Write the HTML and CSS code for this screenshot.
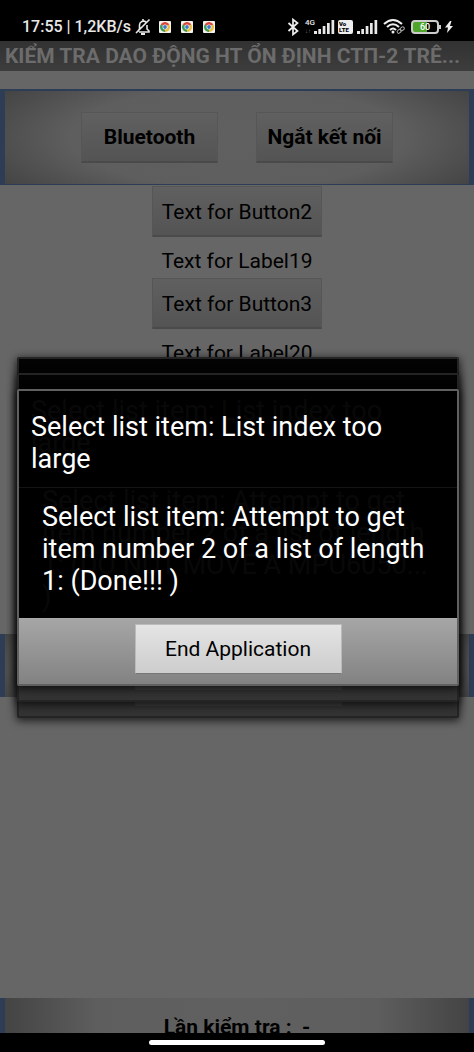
FILE: index.html
```html
<!DOCTYPE html>
<html lang="vi">
<head>
<meta charset="utf-8">
<meta name="viewport" content="width=device-width, initial-scale=1">
<title>Kiểm tra dao động</title>
<link rel="stylesheet" href="styles.css">
</head>
<body>
<svg class="defs" width="0" height="0" aria-hidden="true">
  <symbol id="chrome" viewBox="0 0 12 12">
    <rect width="12" height="12" rx="1" fill="#f4f1ec"/>
    <path d="M6 6 1.7 3.5A5 5 0 0 1 10.3 3.5Z" fill="#d9483b"/>
    <path d="M6 6 10.3 3.5A5 5 0 0 1 6 11Z" fill="#e9bd3a"/>
    <path d="M6 6 6 11A5 5 0 0 1 1.7 3.5Z" fill="#3f9a55"/>
    <circle cx="6" cy="6" r="2.5" fill="#fff"/>
    <circle cx="6" cy="6" r="1.9" fill="#3f77cf"/>
  </symbol>
  <symbol id="signal" viewBox="0 0 22 14">
    <path d="M1 11h3v3H1zM5.300 9h2.700v5H5.300zM9.700 6h2.700v8H9.700zM14 3h2.700v11H14zM18.500 0h2.700v14h-2.700z" fill="#e8e8e8"/>
  </symbol>
</svg>
<div class="screen">
  <header class="status">
    <span class="clock">17:55 | 1,2KB/s</span>
    <svg class="bell" viewBox="0 0 16 18" fill="none" stroke="#e8e8e8" stroke-width="1.600"><path d="M3 14V13L4.500 11V7A4 4 0 0 1 11 4M12 7V11L14 13V14H4M1 15 14.500 1.500"/><path d="M6 16h4" stroke-width="2"/><path d="M8 1v2"/></svg>
    <span class="notices">
      <svg class="chrome"><use href="#chrome"/></svg>
      <svg class="chrome"><use href="#chrome"/></svg>
      <svg class="chrome"><use href="#chrome"/></svg>
    </span>
    <span class="system">
      <svg class="bt" viewBox="0 0 11 18" fill="none" stroke="#eee" stroke-width="1.700"><path d="M1 5 10 13 5.500 16.500V1.500L10 5 1 13"/></svg>
      <span class="cell"><span class="net"><b>4G</b><i>↓↑</i></span><svg class="signal"><use href="#signal"/></svg></span>
      <span class="volte"><span>Vo</span><span>LTE</span></span>
      <svg class="signal"><use href="#signal"/></svg>
      <svg class="wifi" viewBox="0 0 22 17" fill="none" stroke="#eee" stroke-width="2"><path d="M1 6Q10 -2 19 6M4 9Q10 3.500 16 9M7 12Q10 9 13 12"/><circle cx="10" cy="14" r="1.500" fill="#eee" stroke="none"/><g stroke="#aaa" stroke-width="1"><rect x="14" y="12" width="4.500" height="3" rx="1.500" transform="rotate(-40 16 13.500)"/><rect x="17" y="9.500" width="4.500" height="3" rx="1.500" transform="rotate(-40 19 11)"/></g></svg>
      <span class="battery">60</span>
      <svg class="bolt" viewBox="0 0 8 12"><path d="M5 0 0 6.500h3L2 12 8 5H5L6.500 0Z" fill="#eee"/></svg>
    </span>
  </header>
  <h1 class="title">KIỂM TRA DAO ĐỘNG HT ỔN ĐỊNH СТП-2 TRÊ...</h1>
  <main class="app">
    <section class="panel actions">
      <button class="btn strong">Bluetooth</button>
      <button class="btn strong">Ngắt kết nối</button>
    </section>
    <section class="list">
      <button class="btn">Text for Button2</button>
      <p class="label">Text for Label19</p>
      <button class="btn">Text for Button3</button>
      <p class="label">Text for Label20</p>
    </section>
    <section class="panel band"></section>
    <div class="space"></div>
    <section class="panel result"><p>Lần kiểm tra :&nbsp; -</p></section>
  </main>
  <footer class="nav"><span class="pill"></span></footer>

  <div class="overlay">
    <section class="dialog behind" aria-hidden="true">
      <h2>Select list item: List index too large</h2>
      <p class="message">Select list item: Attempt to get item number 2 of a list of length 1: (DO NOT MOVE A MPU6050...<br>)<br>&nbsp;</p>
      <div class="foot"><button class="end" tabindex="-1">End Application</button></div>
    </section>
    <section class="dialog behind" aria-hidden="true">
      <h2>Select list item: List index too large</h2>
      <p class="message">Select list item: Attempt to get item number 2 of a list of length 1: (DO NOT MOVE A MPU6050...<br>)</p>
      <div class="foot"><button class="end" tabindex="-1">End Application</button></div>
    </section>
    <section class="dialog front" role="alertdialog" aria-labelledby="dlg-title">
      <h2 id="dlg-title">Select list item: List index too large</h2>
      <p class="message">Select list item: Attempt to get item number 2 of a list of length 1: (Done!!! )</p>
      <div class="foot"><button class="end">End Application</button></div>
    </section>
  </div>
</div>
</body>
</html>
```
FILE: styles.css
```css
* { box-sizing: border-box; }
body, h1, h2, p { margin: 0; }
body { background: #000; font-family: Roboto, "Noto Sans", sans-serif; color: #000; }
button { font-family: inherit; padding: 0; border-radius: 1px; }
.defs { position: absolute; }
.screen { position: relative; display: flex; flex-direction: column; height: 100vh; overflow: hidden; }

.status { display: flex; align-items: center; height: 41px; flex: none; padding: 12px 21px 0 22px; background: #000; color: #e8e8e8; }
.clock { font-size: 16px; font-weight: 500; white-space: nowrap; }
.bell { width: 16px; height: 18px; margin-left: 4px; }
.notices { display: flex; gap: 10px; margin-left: 8px; }
.chrome { width: 12px; height: 12px; }
.system { display: flex; align-items: center; gap: 3px; margin-left: auto; }
.bt { width: 12px; height: 18px; margin-right: 3px; }
.cell { display: flex; align-items: center; }
.net { display: flex; flex-direction: column; width: 12px; margin-right: -4px; font-size: 8px; line-height: 8px; }
.net b { font-weight: 500; }
.net i { font-size: 6px; font-style: normal; color: #777; }
.signal { width: 22px; height: 14px; }
.volte { display: flex; flex-direction: column; width: 15px; height: 14px; padding: 1px; border-radius: 2px; background: #eee; color: #000; font-size: 6px; line-height: 6px; font-weight: 900; }
.wifi { width: 22px; height: 17px; margin-left: 2px; }
.battery { position: relative; width: 28px; height: 14px; margin-left: 3px; border: 2px solid #ccc; border-radius: 4px; background: linear-gradient(90deg, #4fa52a 60%, #000 60%); color: #fff; font-size: 9px; line-height: 10px; font-weight: 500; text-align: center; }
.battery::after { content: ""; position: absolute; right: -4px; top: 3px; width: 2px; height: 4px; background: #ccc; }
.bolt { width: 8px; height: 12px; margin-left: 3px; }

.title { flex: none; height: 30px; padding: 0 5px; background: linear-gradient(#323232, #3d3d3d); color: #6c6c6c; font-size: 21px; line-height: 30px; font-weight: 700; white-space: nowrap; overflow: hidden; }
.app { flex: 1; min-height: 0; display: flex; flex-direction: column; padding-top: 18px; background: #666; overflow: hidden; }
.panel { flex: none; border: solid #2c3d55; border-width: 0 5px; background: radial-gradient(ellipse 60% 90% at center, #606060 0%, #5e5e5e 60%, #444 100%); }
.actions { display: flex; justify-content: center; align-items: center; gap: 38px; height: 96px; border-width: 2px 5px 1px; }
.btn { height: 51px; padding: 2px 9px 0; border: 1px solid #565656; border-bottom: 2px solid #4a4a4a; background: linear-gradient(#606060, #545454); font-size: 21px; color: #000; }
.strong { width: 137px; padding: 0; font-weight: 700; }
.list { flex: 449 1 0; min-height: 0; display: flex; flex-direction: column; align-items: center; overflow: hidden; padding-top: 1px; }
.list .btn, .label { flex: none; }
.label { font-size: 21px; line-height: 24px; padding: 12px 0 5px; }
.band { height: 63px; }
.space { flex: 301 1 0; }
.result { height: 35px; padding-top: 17px; overflow: hidden; text-align: center; font-size: 21px; line-height: 24px; font-weight: 700; background: linear-gradient(90deg, #444, #5e5e5e 20%, #606060 50%, #5e5e5e 80%, #444); }
.nav { flex: none; display: flex; justify-content: center; height: 19px; padding-top: 7px; background: #000; }
.pill { width: 37%; height: 5px; border-radius: 3px; background: #fff; }

.overlay { position: absolute; inset: 41px 0 19px; display: grid; align-items: center; padding: 0 15px 0 17px; }
.dialog { grid-area: 1 / 1; border: 2px solid #606060; border-radius: 2px; box-shadow: 0 2px 8px 1px rgba(0, 0, 0, .7); color: #fff; }
.dialog h2 { padding: 20px 24px 12px 12px; border-bottom: 1px solid #141414; background: rgba(0, 0, 0, .92); font-size: 27px; line-height: 32px; font-weight: 400; }
.message { padding: 13px 23px 21px; background: rgba(0, 0, 0, .92); font-size: 27px; line-height: 32px; }
.foot { display: flex; justify-content: center; height: 66px; padding-top: 5px; background: linear-gradient(#a6a6a6, #828282); border-top: 1px solid #aaa; }
.end { width: 207px; height: 50px; border: 1px solid #bbb; border-bottom-color: #777; background: linear-gradient(#e4e4e4, #cdcdcd); color: #000; font-size: 21px; }
.behind { border-color: #242424; background: #000; color: #666; }
.behind h2, .behind .message { background: #030303; }
.behind .foot { background: #333; border-top-color: #333; }
.behind .end { background: #404040; border-color: #404040; }
```
